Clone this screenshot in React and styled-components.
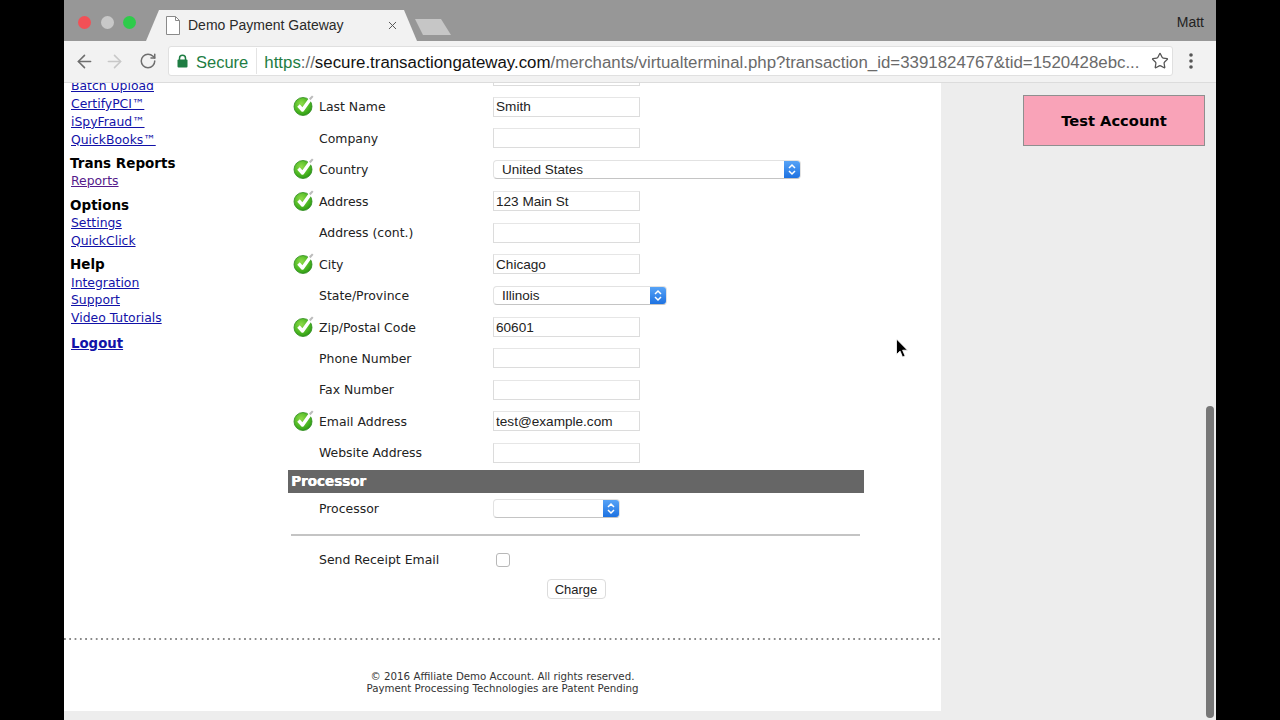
import React from "react";
import styled, { createGlobalStyle } from "styled-components";
import { ArrowLeft, ArrowRight, RotateCw, Star, X } from "lucide-react";

const Global = createGlobalStyle`
  html, body { margin: 0; padding: 0; background: #000; }
  * { box-sizing: border-box; }
`;

const systemFont = `"Liberation Sans", Arial, sans-serif`;

const Screen = styled.div`
  width: 1280px; height: 720px; background: #000; display: flex; justify-content: center; overflow: hidden;
`;
const Win = styled.div`
  width: 1152px; height: 720px; display: flex; flex-direction: column; position: relative; overflow: hidden;
`;
const TitleBar = styled.div`
  height: 41px; flex: none; background: #979797; display: flex; align-items: flex-end; position: relative; z-index: 2;
  font-family: ${systemFont}; color: #222;
`;
const Lights = styled.div`
  display: flex; gap: 9.5px; padding: 0 0 12px 14px; width: 82px; flex: none;
`;
const Light = styled.span`
  width: 13px; height: 13px; border-radius: 50%; background: ${p => p.$c}; display: block;
`;
const Tab = styled.div`
  width: 271px; height: 31px; flex: none; background: #f2f2f2; display: flex; align-items: center;
  clip-path: polygon(0 100%, 13px 0, 258px 0, 271px 100%); padding: 0 18px 1px 19px; font-size: 14px;
`;
const TabTitle = styled.span` margin-left: 7px; flex: 1; white-space: nowrap; color: #2a2a2a; `;
const NewTab = styled.div`
  width: 36px; height: 16px; margin: 0 0 6px -2px; background: #c6c6c6; clip-path: polygon(0 0, 26px 0, 36px 100%, 8px 100%);
`;
const UserName = styled.span` margin-left: auto; padding: 0 12px 11px 0; font-size: 14px; color: #222; `;
const Toolbar = styled.div`
  height: 42px; flex: none; background: #f2f2f2; border-bottom: 1px solid #dcdcdc; display: flex; align-items: center;
  padding: 0 11px 1px 10px; position: relative; z-index: 2; font-family: ${systemFont};
`;
const NavIcons = styled.div`
  display: flex; align-items: center; gap: 9px; width: 94px; flex: none; padding-right: 2px;
`;
const ReloadBox = styled.span` display: flex; margin-left: 5px; `;
const Omni = styled.div`
  width: 1005px; height: 30px; flex: none; background: #fff; border: 1px solid #e0e0e0; border-radius: 3px; display: flex; align-items: center;
  font-size: 16.5px; white-space: nowrap; overflow: hidden; padding-left: 8px;
`;
const Secure = styled.span`
  color: #1e7d43; margin-left: 8px; padding-right: 8px; border-right: 1px solid #e4e4e4; line-height: 28px; height: 26px;
`;
const Url = styled.span`
  margin: 3px 0 0 7px; color: #6a6a6a; flex: 1; overflow: hidden; font-size: 16.85px; line-height: 25px; height: 25px;
  b { font-weight: 400; color: #1e7d43; }
  em { font-style: normal; color: #111; }
`;
const StarBox = styled.span` display: flex; margin: 0 3px 0 6px; `;
const Dots = styled.span` display: flex; margin-left: 16px; `;

const Viewport = styled.div`
  flex: 1; display: flex; background: #ededed; align-items: flex-start; overflow: hidden;
  font-family: "DejaVu Sans", Verdana, sans-serif;
`;
const Main = styled.main`
  width: 877px; height: 628px; flex: none; background: #fff; display: flex; flex-direction: column;
`;
const Columns = styled.div` display: flex; margin-top: -30px; `;
const Sidebar = styled.nav`
  width: 224px; flex: none; padding: 24.3px 0 0 6px; font-size: 12.4px; line-height: 17.8px;
`;
const NavGroup = styled.div` margin-bottom: 6.8px; padding-left: 1px; `;
const NavHead = styled.div`
  font-weight: 700; font-size: 13.5px; color: #000; margin: 0.7px 0 -0.7px -1px;
`;
const NavLink = styled.a`
  display: block; width: fit-content; color: ${p => (p.$visited ? "#551a8b" : "#1212a8")}; text-decoration: underline;
`;
const Logout = styled(NavLink)` font-weight: 700; font-size: 13.3px; margin: 8.2px 0 0 1px; `;

const Form = styled.form`
  width: 576px; flex: none; padding: 6.8px 0 38.5px; font-size: 12.45px; color: #222;
`;
const Row = styled.div`
  height: 31.45px; display: grid; grid-template-columns: 31px 174px 1fr; align-items: center;
`;
const Tick = styled.span` display: flex; padding-left: 5px; margin-top: -2px; `;
const Label = styled.label` white-space: nowrap; grid-column: 2; `;
const Input = styled.input`
  width: 147px; height: 20px; border: 1px solid #dcdcdc; border-top-color: #e6e6e6; background: #fff; padding: 0 2px;
  font: 13.6px ${systemFont}; color: #222; display: block; outline: none;
`;
const SelectBox = styled.div`
  width: ${p => p.$w}px; height: 19px; border: 1px solid #e2e2e2; border-bottom-color: #c4c4c4; border-radius: 4px; background: #fff;
  display: flex; align-items: center; justify-content: space-between; padding-left: 8px; overflow: hidden; line-height: 17px;
  font: 13.5px ${systemFont};
`;
const SelectArrow = styled.span`
  width: 16px; height: 19px; flex: none; display: flex; align-items: center; justify-content: center;
  background: linear-gradient(#5aa6f8, #1a6fe0);
`;
const Band = styled.div`
  height: 23px; background: #666; color: #fff; font-weight: 700; font-size: 13.5px; line-height: 22px; padding-left: 3px; margin-top: 1.4px;
  text-shadow: 0.4px 0 0 #fff;
`;
const Rule = styled.hr`
  margin: 9.8px 4px 8px 3px; border: 0; border-top: 2px solid #c4c4c4;
`;
const Check = styled.input`
  appearance: none; width: 14px; height: 14px; margin: 0 0 0 3px; border: 1px solid #b8b8b8; border-radius: 3px; background: #fff; display: block;
`;
const Actions = styled.div` display: flex; justify-content: center; margin-top: 3.5px; `;
const Button = styled.button`
  height: 20px; width: 59px; padding: 0; border: 1px solid #dcdcdc; border-radius: 4px; background: #fff; color: #222;
  font: 13px ${systemFont};
`;
const Footer = styled.footer`
  background: linear-gradient(to right, #8a8a8a 1.6px, transparent 1.6px) 0 0 / 5.3px 2px repeat-x;
  padding-top: 32px; text-align: center; font-size: 10.25px; line-height: 12.3px; color: #333; flex: none;
`;
const Aside = styled.aside` flex: 1; padding: 12px 11px 0 82px; `;
const Badge = styled.div`
  height: 51px; background: #f9a3b8; border: 1px solid #8f8f8f; display: flex; align-items: center; justify-content: center;
  font-weight: 700; font-size: 14.7px; color: #000;
`;
const Thumb = styled.div`
  position: absolute; left: 1142px; top: 406px; width: 8px; height: 312px; border-radius: 4px; background: #777; z-index: 3;
`;
const Cursor = styled.svg` position: absolute; left: 831px; top: 338px; z-index: 3; `;

const Page = () => (
  <svg width="16" height="19" viewBox="0 0 16 19" fill="none">
    <path d="M1.5.5h9l4 4v14h-13z" fill="#fff" stroke="#8a8a8a" />
    <path d="M10.5.5v4h4" stroke="#8a8a8a" />
  </svg>
);
const LockIcon = () => (
  <svg width="11" height="14" viewBox="0 0 11 14">
    <path d="M2.5 6V4.2a3 3 0 0 1 6 0V6" fill="none" stroke="#1e7d43" strokeWidth="1.5" />
    <rect x=".5" y="5.5" width="10" height="8" rx="1" fill="#1e7d43" />
  </svg>
);
const MoreDots = () => (
  <svg width="4" height="16" viewBox="0 0 4 16" fill="#555">
    <circle cx="2" cy="2" r="1.8" /><circle cx="2" cy="8" r="1.8" /><circle cx="2" cy="14" r="1.8" />
  </svg>
);
const TickIcon = () => (
  <svg width="22" height="21" viewBox="0 0 22 21">
    <defs>
      <radialGradient id="g" cx=".4" cy=".35" r=".8">
        <stop offset="0" stopColor="#8fdc4a" /><stop offset=".6" stopColor="#46b31f" /><stop offset="1" stopColor="#1f8510" />
      </radialGradient>
    </defs>
    <circle cx="10" cy="11.5" r="9" fill="url(#g)" stroke="#2b8a1a" strokeWidth=".8" />
    <path d="M5.5 10.5l4 4.5L17 4.5" fill="none" stroke="#fff" strokeWidth="3.4" strokeLinejoin="round" />
    <path d="M16 3.5l3-3 1.5 1.2-3 3.6z" fill="#bcbcbc" />
  </svg>
);
const Chevrons = () => (
  <svg width="8" height="13" viewBox="0 0 8 13" fill="none" stroke="#fff" strokeWidth="1.5">
    <path d="M1 5l3-3 3 3M1 8l3 3 3-3" />
  </svg>
);

const Field = ({ ok, label, children }) => (
  <Row>
    {ok ? <Tick><TickIcon /></Tick> : <span />}
    <Label>{label}</Label>
    <div>{children}</div>
  </Row>
);
const Text = ({ value }) => <Input readOnly defaultValue={value || ""} />;
const Select = ({ w, value }) => (
  <SelectBox $w={w}><span>{value}</span><SelectArrow><Chevrons /></SelectArrow></SelectBox>
);

export default function App() {
  return (
    <Screen>
      <Global />
      <Win>
        <TitleBar>
          <Lights>
            <Light $c="#f25056" /><Light $c="#c8c8c8" /><Light $c="#2ecb4a" />
          </Lights>
          <Tab>
            <Page />
            <TabTitle>Demo Payment Gateway</TabTitle>
            <X size={13} color="#555" strokeWidth={1.8} />
          </Tab>
          <NewTab />
          <UserName>Matt</UserName>
        </TitleBar>
        <Toolbar>
          <NavIcons>
            <ArrowLeft size={21} color="#6e6e6e" strokeWidth={1.8} />
            <ArrowRight size={21} color="#c8c8c8" strokeWidth={1.8} />
            <ReloadBox><RotateCw size={18} color="#6e6e6e" strokeWidth={2} /></ReloadBox>
          </NavIcons>
          <Omni>
            <LockIcon />
            <Secure>Secure</Secure>
            <Url><b>https</b>://<em>secure.transactiongateway.com</em>/merchants/virtualterminal.php?transaction_id=3391824767&amp;tid=1520428ebc...</Url>
            <StarBox><Star size={18} color="#555" strokeWidth={1.7} /></StarBox>
          </Omni>
          <Dots><MoreDots /></Dots>
        </Toolbar>
        <Viewport>
          <Main>
            <Columns>
              <Sidebar>
                <NavGroup>
                  <NavLink href="#">Batch Upload</NavLink>
                  <NavLink href="#">CertifyPCI™</NavLink>
                  <NavLink href="#">iSpyFraud™</NavLink>
                  <NavLink href="#">QuickBooks™</NavLink>
                </NavGroup>
                <NavGroup>
                  <NavHead>Trans Reports</NavHead>
                  <NavLink href="#" $visited>Reports</NavLink>
                </NavGroup>
                <NavGroup>
                  <NavHead>Options</NavHead>
                  <NavLink href="#">Settings</NavLink>
                  <NavLink href="#">QuickClick</NavLink>
                </NavGroup>
                <NavGroup>
                  <NavHead>Help</NavHead>
                  <NavLink href="#">Integration</NavLink>
                  <NavLink href="#">Support</NavLink>
                  <NavLink href="#">Video Tutorials</NavLink>
                </NavGroup>
                <Logout href="#">Logout</Logout>
              </Sidebar>
              <Form>
                <Field><Text /></Field>
                <Field ok label="Last Name"><Text value="Smith" /></Field>
                <Field label="Company"><Text /></Field>
                <Field ok label="Country"><Select w={308} value="United States" /></Field>
                <Field ok label="Address"><Text value="123 Main St" /></Field>
                <Field label="Address (cont.)"><Text /></Field>
                <Field ok label="City"><Text value="Chicago" /></Field>
                <Field label="State/Province"><Select w={174} value="Illinois" /></Field>
                <Field ok label="Zip/Postal Code"><Text value="60601" /></Field>
                <Field label="Phone Number"><Text /></Field>
                <Field label="Fax Number"><Text /></Field>
                <Field ok label="Email Address"><Text value="test@example.com" /></Field>
                <Field label="Website Address"><Text /></Field>
                <Band>Processor</Band>
                <Field label="Processor"><Select w={127} value="" /></Field>
                <Rule />
                <Field label="Send Receipt Email"><Check type="checkbox" /></Field>
                <Actions><Button type="button">Charge</Button></Actions>
              </Form>
            </Columns>
            <Footer>
              © 2016 Affiliate Demo Account. All rights reserved.<br />
              Payment Processing Technologies are Patent Pending
            </Footer>
          </Main>
          <Aside><Badge>Test Account</Badge></Aside>
        </Viewport>
        <Thumb />
        <Cursor width="13" height="21" viewBox="0 0 13 21">
          <path d="M1.5 1v15.5l3.6-3.4 2.4 6 2.6-1.1-2.5-5.8h4.9z" fill="#000" stroke="#fff" strokeWidth=".8" />
        </Cursor>
      </Win>
    </Screen>
  );
}
